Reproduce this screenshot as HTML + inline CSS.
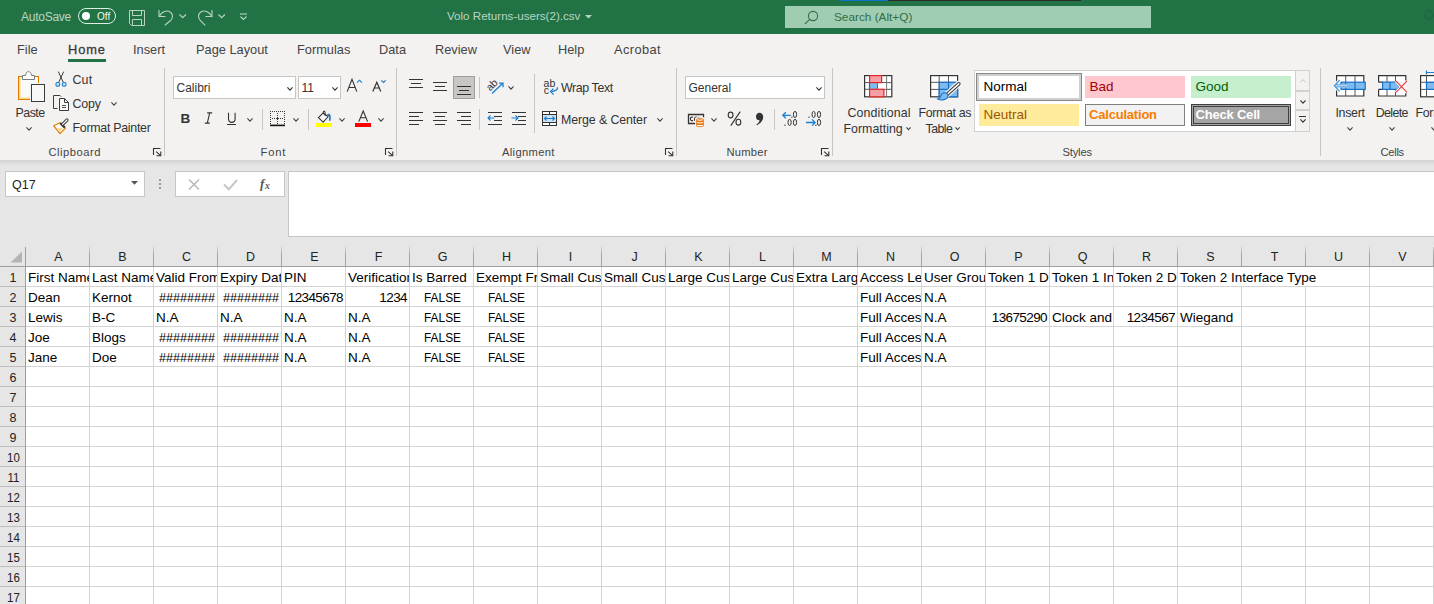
<!DOCTYPE html><html><head><meta charset="utf-8"><style>

*{margin:0;padding:0;box-sizing:border-box}
html,body{width:1434px;height:604px;overflow:hidden;background:#e6e6e6;font-family:"Liberation Sans",sans-serif;position:relative}
.ab{position:absolute;white-space:nowrap}
.t{position:absolute;white-space:nowrap;line-height:1}
svg{position:absolute;overflow:visible}

</style></head><body>
<div class="ab" style="left:0;top:0;width:1434px;height:34px;background:#217346"></div>
<div class="ab" style="left:840px;top:0;width:241px;height:1px;background:#2b2b2b"></div>
<div class="ab" style="left:840px;top:0;width:48px;height:1px;background:#0a72c8"></div>
<div class="t" style="left:21px;top:10.5px;font-size:12px;letter-spacing:-0.25px;color:#b9d5c2">AutoSave</div>
<div class="ab" style="left:78px;top:8px;width:38px;height:16px;border:1.3px solid #e0ece4;border-radius:8px"></div>
<div class="ab" style="left:82px;top:12px;width:8px;height:8px;background:#fff;border-radius:50%"></div>
<div class="t" style="left:97px;top:12px;font-size:10px;color:#f2f7f3">Off</div>
<svg style="left:128px;top:9px" width="18" height="18" viewBox="0 0 18 18"><g fill="none" stroke="#b9d5c2" stroke-width="1"><path d="M1.5 1.5h15v15h-13l-2-2z"/><path d="M4.5 1.5v5h9v-5"/><path d="M4.5 16.5v-6h9v6"/></g></svg>
<svg style="left:158px;top:9px" width="18" height="18" viewBox="0 0 18 18"><g fill="none" stroke="#b9d5c2" stroke-width="1.1"><path d="M1 1v6.5h6.5"/><path d="M1.5 7C3.5 2.5 9 0.5 12.5 3.2c3 2.4 2.4 6-0.2 8.6L6.8 16.3"/></g></svg>
<svg style="left:179px;top:14px" width="8" height="5" viewBox="0 0 8 5"><path d="M0.5 0.5l3.2 3.2 3.2-3.2" fill="none" stroke="#b9d5c2" stroke-width="1.1"/></svg>
<svg style="left:196px;top:9px" width="18" height="18" viewBox="0 0 18 18"><g fill="none" stroke="#b9d5c2" stroke-width="1.1"><path d="M16 1v6.5h-6.5"/><path d="M15.5 7C13.5 2.5 8 0.5 4.5 3.2c-3 2.4-2.4 6 0.2 8.6l4.5 4.5"/></g></svg>
<svg style="left:218px;top:14px" width="8" height="5" viewBox="0 0 8 5"><path d="M0.5 0.5l3.2 3.2 3.2-3.2" fill="none" stroke="#b9d5c2" stroke-width="1.1"/></svg>
<svg style="left:240px;top:13px" width="8" height="8" viewBox="0 0 8 8"><g fill="none" stroke="#b9d5c2" stroke-width="1.1"><path d="M0 1h7"/><path d="M0.5 3.5l3 3 3-3"/></g></svg>
<div class="t" style="left:447px;top:10px;font-size:11.6px;color:#b9d5c2">Volo Returns-users(2).csv</div>
<svg style="left:585px;top:15px" width="7" height="4" viewBox="0 0 7 4"><path d="M0 0h7l-3.5 3.5z" fill="#b9d5c2"/></svg>
<div class="ab" style="left:785px;top:6px;width:366px;height:22px;background:#a0cdb2"></div>
<svg style="left:804px;top:10px" width="15" height="15" viewBox="0 0 15 15"><g fill="none" stroke="#2f6e48" stroke-width="1.1"><circle cx="9" cy="6" r="4.6"/><path d="M5.7 9.3L0.8 14.2"/></g></svg>
<div class="t" style="left:834px;top:11.5px;font-size:11.8px;color:#2f6e48">Search (Alt+Q)</div>
<div class="ab" style="left:1424px;top:10px;width:10px;height:10px;border:2px solid #1f6a40;border-radius:50%"></div>
<div class="ab" style="left:0;top:34px;width:1434px;height:126px;background:#f3f2f1"></div>
<div class="t" style="left:17px;top:44px;font-size:12.8px;letter-spacing:0;color:#444">File</div>
<div class="t" style="left:68px;top:44px;font-size:12.8px;letter-spacing:0.9px;-webkit-text-stroke:0.3px #3a3a3a;color:#3a3a3a">Home</div>
<div class="t" style="left:133px;top:44px;font-size:12.8px;letter-spacing:0;color:#444">Insert</div>
<div class="t" style="left:196px;top:44px;font-size:12.8px;letter-spacing:0;color:#444">Page Layout</div>
<div class="t" style="left:297px;top:44px;font-size:12.8px;letter-spacing:0;color:#444">Formulas</div>
<div class="t" style="left:379px;top:44px;font-size:12.8px;letter-spacing:0;color:#444">Data</div>
<div class="t" style="left:435px;top:44px;font-size:12.8px;letter-spacing:0;color:#444">Review</div>
<div class="t" style="left:503px;top:44px;font-size:12.8px;letter-spacing:0;color:#444">View</div>
<div class="t" style="left:558px;top:44px;font-size:12.8px;letter-spacing:0;color:#444">Help</div>
<div class="t" style="left:614px;top:44px;font-size:12.8px;letter-spacing:0.4px;color:#444">Acrobat</div>
<div class="ab" style="left:68px;top:59px;width:38px;height:3px;background:#217346"></div>
<div class="ab" style="left:0;top:160px;width:1434px;height:6px;background:linear-gradient(#d2d2d2,#e6e6e6)"></div>
<div class="ab" style="left:164px;top:68px;width:1px;height:88px;background:#c8c6c4"></div>
<div class="ab" style="left:396px;top:68px;width:1px;height:88px;background:#c8c6c4"></div>
<div class="ab" style="left:676px;top:68px;width:1px;height:88px;background:#c8c6c4"></div>
<div class="ab" style="left:832px;top:68px;width:1px;height:88px;background:#c8c6c4"></div>
<div class="ab" style="left:1320px;top:68px;width:1px;height:88px;background:#c8c6c4"></div>
<div class="t" style="left:48.5px;top:146.52px;font-size:11.2px;color:#444;font-weight:normal;letter-spacing:0.5px">Clipboard</div>
<div class="t" style="left:260.5px;top:146.52px;font-size:11.2px;color:#444;font-weight:normal;letter-spacing:0.8px">Font</div>
<div class="t" style="left:502px;top:146.52px;font-size:11.2px;color:#444;font-weight:normal;letter-spacing:0.33px">Alignment</div>
<div class="t" style="left:726.5px;top:146.52px;font-size:11.2px;color:#444;font-weight:normal;letter-spacing:0.24px">Number</div>
<div class="t" style="left:1062.5px;top:146.52px;font-size:11.2px;color:#444;font-weight:normal;letter-spacing:-0.18px">Styles</div>
<div class="t" style="left:1380.5px;top:146.52px;font-size:11.2px;color:#444;font-weight:normal;letter-spacing:-0.3px">Cells</div>
<svg style="left:152px;top:147px" width="11" height="11" viewBox="0 0 11 11"><g fill="none" stroke="#333" stroke-width="1.1"><path d="M1.5 8V1.5H8.5"/><path d="M4.2 4.6L8.6 8.6"/><path d="M4.5 8.8h4.3V4.5"/></g></svg>
<svg style="left:384px;top:147px" width="11" height="11" viewBox="0 0 11 11"><g fill="none" stroke="#333" stroke-width="1.1"><path d="M1.5 8V1.5H8.5"/><path d="M4.2 4.6L8.6 8.6"/><path d="M4.5 8.8h4.3V4.5"/></g></svg>
<svg style="left:664px;top:147px" width="11" height="11" viewBox="0 0 11 11"><g fill="none" stroke="#333" stroke-width="1.1"><path d="M1.5 8V1.5H8.5"/><path d="M4.2 4.6L8.6 8.6"/><path d="M4.5 8.8h4.3V4.5"/></g></svg>
<svg style="left:820px;top:147px" width="11" height="11" viewBox="0 0 11 11"><g fill="none" stroke="#333" stroke-width="1.1"><path d="M1.5 8V1.5H8.5"/><path d="M4.2 4.6L8.6 8.6"/><path d="M4.5 8.8h4.3V4.5"/></g></svg>
<svg style="left:17px;top:71px" width="30" height="32" viewBox="0 0 30 32">
<rect x="1.5" y="5.5" width="20" height="23" fill="#fafafa" stroke="#e07b00" stroke-width="1"/>
<path d="M2.8 6.5v20.7h18.7" fill="none" stroke="#fcd98a" stroke-width="1.6"/>
<path d="M5.5 8.5v-4h3c0.5-3 1.5-3.8 3-3.8s2.5 0.8 3 3.8h3v4z" fill="#fff" stroke="#7a7a7a" stroke-width="1"/>
<rect x="13" y="12" width="16" height="20" fill="#f3f2f1"/>
<rect x="14.5" y="13.5" width="13" height="17" fill="#f8f8f8" stroke="#3c3c3c" stroke-width="1"/>
</svg>
<div class="t" style="left:15.5px;top:106.50px;font-size:12.4px;color:#333;font-weight:normal;letter-spacing:-0.5px">Paste</div>
<svg style="left:26px;top:127px" width="6" height="3.5" viewBox="0 0 6 3.5"><path d="M0.4 0.4L3.0 3.1L5.6 0.4" fill="none" stroke="#444" stroke-width="1.1"/></svg>
<svg style="left:55px;top:71px" width="12" height="16" viewBox="0 0 12 16">
<g fill="none" stroke="#3c3c3c" stroke-width="1"><path d="M3.3 0.6L8.4 11.5"/><path d="M8.7 0.6L3.6 11.5"/></g>
<rect x="1" y="11.5" width="3.6" height="3.6" rx="1.2" fill="#d6e6f2" stroke="#1a7fd0" stroke-width="1.1"/>
<rect x="7.4" y="11.5" width="3.6" height="3.6" rx="1.2" fill="#d6e6f2" stroke="#1a7fd0" stroke-width="1.1"/>
</svg>
<div class="t" style="left:72.5px;top:73.80px;font-size:12.4px;color:#333;font-weight:normal;letter-spacing:0.15px">Cut</div>
<svg style="left:53px;top:95px" width="17" height="17" viewBox="0 0 17 17">
<path d="M4.5 13.5H0.5V0.5h6.5l1.2 1.2" fill="none" stroke="#3c3c3c" stroke-width="1"/>
<path d="M6.5 15.5V3.5h5l4 4v8z" fill="#fafafa" stroke="#3c3c3c" stroke-width="1"/>
<path d="M11.5 3.5v4h4" fill="none" stroke="#3c3c3c" stroke-width="1"/>
<path d="M9 10.5h4M9 12.5h4" stroke="#3c3c3c" stroke-width="0.9"/>
</svg>
<div class="t" style="left:72.5px;top:97.50px;font-size:12.4px;color:#333;font-weight:normal;letter-spacing:-0.2px">Copy</div>
<svg style="left:110.5px;top:102px" width="6" height="3.5" viewBox="0 0 6 3.5"><path d="M0.4 0.4L3.0 3.1L5.6 0.4" fill="none" stroke="#444" stroke-width="1.1"/></svg>
<svg style="left:53px;top:118px" width="17" height="17" viewBox="0 0 17 17">
<path d="M0.8 7.8L7 4.8l5.4 5.4L7 15.6z" fill="#fff" stroke="#e07b00" stroke-width="1.2" stroke-linejoin="round"/>
<path d="M3.5 10.5L10 9.8 7 14z" fill="#fcd98a"/>
<path d="M7.2 5L11.8 9.6" stroke="#3c3c3c" stroke-width="2.2"/>
<path d="M9.4 6.6l4.6-4.6" stroke="#3c3c3c" stroke-width="3.2" stroke-linecap="round"/>
<path d="M9.6 6.4l4.4-4.4" stroke="#fff" stroke-width="1.2" stroke-linecap="round"/>
</svg>
<div class="t" style="left:72.5px;top:121.50px;font-size:12.4px;color:#333;font-weight:normal;letter-spacing:-0.28px">Format Painter</div>
<div class="ab" style="left:173px;top:76px;width:123px;height:23px;background:#fff;border:1px solid #c8c6c4"></div>
<div class="t" style="left:176.5px;top:82.04px;font-size:12px;color:#333;font-weight:normal;">Calibri</div>
<svg style="left:286.5px;top:86.5px" width="6" height="3.5" viewBox="0 0 6 3.5"><path d="M0.4 0.4L3.0 3.1L5.6 0.4" fill="none" stroke="#333" stroke-width="1.1"/></svg>
<div class="ab" style="left:298px;top:76px;width:43px;height:23px;background:#fff;border:1px solid #c8c6c4"></div>
<div class="t" style="left:301.5px;top:82.04px;font-size:12px;color:#333;font-weight:normal;">11</div>
<svg style="left:331.5px;top:86.5px" width="6" height="3.5" viewBox="0 0 6 3.5"><path d="M0.4 0.4L3.0 3.1L5.6 0.4" fill="none" stroke="#333" stroke-width="1.1"/></svg>
<svg style="left:346px;top:78px" width="18" height="15" viewBox="0 0 18 15">
<path d="M1.2 13.6L6 1.2 10.8 13.6M3 9.5h6" fill="none" stroke="#333" stroke-width="1.1"/>
<path d="M11.2 4.5L13.5 2.2 15.8 4.5" fill="none" stroke="#1a7fd0" stroke-width="1.1"/>
</svg>
<svg style="left:372px;top:78px" width="16" height="15" viewBox="0 0 16 15">
<path d="M0.8 13.6L4.8 4.2 8.8 13.6M2.4 10h5" fill="none" stroke="#333" stroke-width="1.2"/>
<path d="M9.3 2.3L11.5 4.5 13.7 2.3" fill="none" stroke="#1a7fd0" stroke-width="1.2"/>
</svg>
<div class="t" style="left:180.5px;top:111.57px;font-size:13.5px;color:#333;font-weight:bold;">B</div>
<svg style="left:204px;top:112px" width="9" height="12" viewBox="0 0 9 12"><path d="M3.2 0.9h5M0.8 11.1h5M5.7 0.9L3.3 11.1" fill="none" stroke="#333" stroke-width="1.1"/></svg>
<svg style="left:227px;top:112px" width="10" height="14" viewBox="0 0 10 14"><path d="M1.5 0.8v6c0 2.6 1.3 3.6 3.3 3.6s3.3-1 3.3-3.6v-6" fill="none" stroke="#333" stroke-width="1.1"/></svg>
<div class="ab" style="left:227px;top:124px;width:9px;height:1px;background:#333"></div>
<svg style="left:246.5px;top:118px" width="6" height="3.5" viewBox="0 0 6 3.5"><path d="M0.4 0.4L3.0 3.1L5.6 0.4" fill="none" stroke="#444" stroke-width="1.1"/></svg>
<div class="ab" style="left:262px;top:109px;width:1px;height:21px;background:#c8c6c4"></div>
<svg style="left:269px;top:111px" width="17" height="16" viewBox="0 0 17 16"><g fill="#3a3a3a"><rect x="1" y="0" width="1" height="1"/><rect x="3" y="0" width="1" height="1"/><rect x="5" y="0" width="1" height="1"/><rect x="7" y="0" width="1" height="1"/><rect x="9" y="0" width="1" height="1"/><rect x="11" y="0" width="1" height="1"/><rect x="13" y="0" width="1" height="1"/><rect x="15" y="0" width="1" height="1"/><rect x="1" y="2" width="1" height="1"/><rect x="15" y="2" width="1" height="1"/><rect x="1" y="4" width="1" height="1"/><rect x="15" y="4" width="1" height="1"/><rect x="1" y="6" width="1" height="1"/><rect x="15" y="6" width="1" height="1"/><rect x="1" y="8" width="1" height="1"/><rect x="15" y="8" width="1" height="1"/><rect x="1" y="10" width="1" height="1"/><rect x="15" y="10" width="1" height="1"/><rect x="1" y="12" width="1" height="1"/><rect x="15" y="12" width="1" height="1"/><rect x="8" y="2" width="1" height="1"/><rect x="8" y="4" width="1" height="1"/><rect x="8" y="10" width="1" height="1"/><rect x="8" y="12" width="1" height="1"/><rect x="3" y="7" width="1" height="1"/><rect x="5" y="7" width="1" height="1"/><rect x="11" y="7" width="1" height="1"/><rect x="13" y="7" width="1" height="1"/><rect x="7" y="7" width="3" height="1"/><rect x="8" y="6" width="1" height="3"/></g><rect x="1" y="13.6" width="15" height="1.6" fill="#111"/></svg>
<svg style="left:292.5px;top:118px" width="6" height="3.5" viewBox="0 0 6 3.5"><path d="M0.4 0.4L3.0 3.1L5.6 0.4" fill="none" stroke="#444" stroke-width="1.1"/></svg>
<div class="ab" style="left:308px;top:109px;width:1px;height:21px;background:#c8c6c4"></div>
<svg style="left:315px;top:110px" width="17" height="18" viewBox="0 0 17 18">
<path d="M3.4 7.7L8 3.2 13.2 6.5 8.2 12.2z" fill="#fafafa" stroke="#333" stroke-width="1.1" stroke-linejoin="round"/>
<path d="M8.2 3.1C8.3 1.6 8.8 1 9.4 1.2c0.6 0.3 0.8 2 0.8 4.8" fill="none" stroke="#333" stroke-width="1.1"/>
<path d="M12.5 5.5c1.2-1.6 2.6-0.8 2.5 1.6l-0.3 3.7" fill="none" stroke="#1a6fc2" stroke-width="1.6"/>
<rect x="1" y="13" width="16" height="4" fill="#ffff00"/>
</svg>
<svg style="left:338.5px;top:118px" width="6" height="3.5" viewBox="0 0 6 3.5"><path d="M0.4 0.4L3.0 3.1L5.6 0.4" fill="none" stroke="#444" stroke-width="1.1"/></svg>
<svg style="left:358px;top:110px" width="11" height="12" viewBox="0 0 11 12"><path d="M0.8 11.6L5.2 1 9.6 11.6M2.5 7.8h5.4" fill="none" stroke="#333" stroke-width="1.1"/></svg>
<div class="ab" style="left:355px;top:123px;width:16px;height:4px;background:#ff0000"></div>
<svg style="left:377.5px;top:118px" width="6" height="3.5" viewBox="0 0 6 3.5"><path d="M0.4 0.4L3.0 3.1L5.6 0.4" fill="none" stroke="#444" stroke-width="1.1"/></svg>
<div class="ab" style="left:409px;top:79px;width:14px;height:1px;background:#333"></div>
<div class="ab" style="left:411px;top:83px;width:10px;height:1px;background:#333"></div>
<div class="ab" style="left:409px;top:87px;width:0px;height:1px;background:#333"></div>
<div class="ab" style="left:433px;top:82px;width:14px;height:1px;background:#333"></div>
<div class="ab" style="left:435px;top:86px;width:10px;height:1px;background:#333"></div>
<div class="ab" style="left:433px;top:90px;width:14px;height:1px;background:#333"></div>
<div class="ab" style="left:453px;top:76px;width:22px;height:23px;background:#c8c6c4;border:1px solid #a19f9d"></div>
<div class="ab" style="left:457px;top:86px;width:14px;height:1px;background:#333"></div>
<div class="ab" style="left:459px;top:90px;width:10px;height:1px;background:#333"></div>
<div class="ab" style="left:457px;top:94px;width:14px;height:1px;background:#333"></div>
<div class="ab" style="left:409px;top:87px;width:14px;height:1px;background:#333"></div>
<div class="ab" style="left:479px;top:77px;width:1px;height:21px;background:#c8c6c4"></div>
<svg style="left:484px;top:76px" width="22" height="20" viewBox="0 0 22 20">
<text x="0" y="0" font-size="10.5" font-family="Liberation Sans" fill="#333" transform="translate(6.2 15.6) rotate(-45)">ab</text>
<path d="M8 17.5L18.8 7.2" stroke="#1a7fd0" stroke-width="1.3"/>
<path d="M15 7.2h4v4" fill="none" stroke="#1a7fd0" stroke-width="1.3"/>
</svg>
<svg style="left:507.5px;top:85.5px" width="6" height="3.5" viewBox="0 0 6 3.5"><path d="M0.4 0.4L3.0 3.1L5.6 0.4" fill="none" stroke="#444" stroke-width="1.1"/></svg>
<div class="ab" style="left:534px;top:74px;width:1px;height:59px;background:#c8c6c4"></div>
<svg style="left:543px;top:77px" width="17" height="19" viewBox="0 0 17 19">
<text x="0.6" y="9.6" font-size="10.5" font-family="Liberation Sans" fill="#333">ab</text>
<text x="0.8" y="16.6" font-size="10.5" font-family="Liberation Sans" fill="#333">c</text>
<path d="M14.2 10.2c0.9 1.8-0.6 3.8-5.6 4.4" fill="none" stroke="#1a7fd0" stroke-width="1.3"/>
<path d="M10.4 11.6L7.6 14.6l3 3" fill="none" stroke="#1a7fd0" stroke-width="1.3"/>
</svg>
<div class="t" style="left:561px;top:82.00px;font-size:12.4px;color:#333;font-weight:normal;letter-spacing:-0.4px">Wrap Text</div>
<div class="ab" style="left:409px;top:112px;width:14px;height:1px;background:#333"></div>
<div class="ab" style="left:409px;top:116px;width:10px;height:1px;background:#333"></div>
<div class="ab" style="left:409px;top:120px;width:14px;height:1px;background:#333"></div>
<div class="ab" style="left:409px;top:124px;width:10px;height:1px;background:#333"></div>
<div class="ab" style="left:433px;top:112px;width:14px;height:1px;background:#333"></div>
<div class="ab" style="left:435px;top:116px;width:10px;height:1px;background:#333"></div>
<div class="ab" style="left:433px;top:120px;width:14px;height:1px;background:#333"></div>
<div class="ab" style="left:435px;top:124px;width:10px;height:1px;background:#333"></div>
<div class="ab" style="left:457px;top:112px;width:14px;height:1px;background:#333"></div>
<div class="ab" style="left:461px;top:116px;width:10px;height:1px;background:#333"></div>
<div class="ab" style="left:457px;top:120px;width:14px;height:1px;background:#333"></div>
<div class="ab" style="left:461px;top:124px;width:10px;height:1px;background:#333"></div>
<div class="ab" style="left:479px;top:109px;width:1px;height:21px;background:#c8c6c4"></div>
<div class="ab" style="left:488px;top:112px;width:14px;height:1px;background:#333"></div>
<div class="ab" style="left:488px;top:124px;width:14px;height:1px;background:#333"></div>
<div class="ab" style="left:494px;top:116px;width:8px;height:1px;background:#333"></div>
<div class="ab" style="left:494px;top:120px;width:8px;height:1px;background:#333"></div>
<svg style="left:487px;top:114px" width="8" height="8" viewBox="0 0 8 8"><path d="M7.5 4H1M3.5 1.5L1 4l2.5 2.5" fill="none" stroke="#1a7fd0" stroke-width="1.1"/></svg>
<div class="ab" style="left:512px;top:112px;width:14px;height:1px;background:#333"></div>
<div class="ab" style="left:512px;top:124px;width:14px;height:1px;background:#333"></div>
<div class="ab" style="left:518px;top:116px;width:8px;height:1px;background:#333"></div>
<div class="ab" style="left:518px;top:120px;width:8px;height:1px;background:#333"></div>
<svg style="left:511px;top:114px" width="8" height="8" viewBox="0 0 8 8"><path d="M0.5 4H7M4.5 1.5L7 4 4.5 6.5" fill="none" stroke="#1a7fd0" stroke-width="1.1"/></svg>
<svg style="left:542px;top:111px" width="15" height="15" viewBox="0 0 15 15">
<rect x="0.5" y="0.5" width="14" height="14" fill="#fff" stroke="#333" stroke-width="1"/>
<path d="M0.5 3.5h14M0.5 11.5h14M7.5 0.5v3M7.5 11.5v3" stroke="#333" stroke-width="1"/>
<rect x="1" y="4" width="13" height="7" fill="#cfe3f5"/>
<path d="M2.5 7.5h10M4.5 5.5l-2 2 2 2M10.5 5.5l2 2-2 2" fill="none" stroke="#1a7fd0" stroke-width="1.1"/>
</svg>
<div class="t" style="left:561px;top:113.80px;font-size:12.4px;color:#333;font-weight:normal;letter-spacing:-0.11px">Merge &amp; Center</div>
<svg style="left:657px;top:118px" width="6" height="3.5" viewBox="0 0 6 3.5"><path d="M0.4 0.4L3.0 3.1L5.6 0.4" fill="none" stroke="#444" stroke-width="1.1"/></svg>
<div class="ab" style="left:685px;top:76px;width:140px;height:23px;background:#fff;border:1px solid #c8c6c4"></div>
<div class="t" style="left:688.5px;top:82.04px;font-size:12px;color:#333;font-weight:normal;">General</div>
<svg style="left:815.5px;top:86.5px" width="6" height="3.5" viewBox="0 0 6 3.5"><path d="M0.4 0.4L3.0 3.1L5.6 0.4" fill="none" stroke="#333" stroke-width="1.1"/></svg>
<svg style="left:687px;top:113px" width="18" height="15" viewBox="0 0 18 15">
<path d="M8.5 10.5H1.5V1.5h15v6" fill="none" stroke="#333" stroke-width="1.3"/>
<path d="M6 4.2c-1.2-0.6-2.6 0-2.6 1.6s1.4 2.2 2.6 1.6M10 4.2c-1.2-0.6-2.4 0-2.4 1.6v2" fill="none" stroke="#333" stroke-width="1.1"/>
<path d="M12.5 4.5c-0.8-0.3-1.6 0-1.9 0.8" fill="none" stroke="#333" stroke-width="1.1"/>
<rect x="8.2" y="4.2" width="9.6" height="10.6" rx="1" fill="#f3f2f1"/>
<path d="M9.2 6.4c0-1.6 7.6-1.6 7.6 0v6.4c0 1.8-7.6 1.8-7.6 0z" fill="#e8740c"/>
<path d="M10.2 6.6c1 0.8 4.6 0.8 5.6 0M10.2 9.4c1 0.8 4.6 0.8 5.6 0M10.2 12.2c1 0.6 4.6 0.6 5.6 0" fill="none" stroke="#fff" stroke-width="1.1"/>
</svg>
<svg style="left:711px;top:118px" width="6" height="3.5" viewBox="0 0 6 3.5"><path d="M0.4 0.4L3.0 3.1L5.6 0.4" fill="none" stroke="#444" stroke-width="1.1"/></svg>
<svg style="left:727px;top:111px" width="16" height="16" viewBox="0 0 16 16">
<ellipse cx="3.6" cy="4" rx="2.4" ry="2.9" fill="none" stroke="#333" stroke-width="1.1"/>
<ellipse cx="11.4" cy="11.2" rx="2.4" ry="2.9" fill="none" stroke="#333" stroke-width="1.1"/>
<path d="M13.2 0.6L3.8 14.6" stroke="#333" stroke-width="1.1"/>
</svg>
<svg style="left:755px;top:112px" width="9" height="14" viewBox="0 0 9 14">
<path d="M4.3 0.8c2.3 0 3.9 1.7 3.9 4.2 0 3.4-2.6 6.3-6.3 8.2l-0.5-0.7c1.8-1.2 3-2.6 3.2-4.2-2.1 0.1-3.6-1.2-3.6-3.6 0-2.2 1.4-3.9 3.3-3.9z" fill="#333"/>
</svg>
<div class="ab" style="left:774px;top:109px;width:1px;height:21px;background:#c8c6c4"></div>
<svg style="left:781px;top:110px" width="17" height="17" viewBox="0 0 17 17">
<path d="M9.8 5.3H1.7M4.8 2.3l-3 3 3 3" fill="none" stroke="#1a7fd0" stroke-width="1.3"/>
<ellipse cx="14" cy="4.5" rx="1.6" ry="3.1" fill="none" stroke="#333" stroke-width="1"/>
<rect x="10.3" y="6.6" width="1.2" height="1.2" fill="#333"/>
<rect x="3.4" y="14.6" width="1.2" height="1.2" fill="#333"/>
<ellipse cx="8.6" cy="12.4" rx="1.6" ry="3.1" fill="none" stroke="#333" stroke-width="1"/>
<ellipse cx="14" cy="12.4" rx="1.6" ry="3.1" fill="none" stroke="#333" stroke-width="1"/>
</svg>
<svg style="left:805px;top:110px" width="17" height="17" viewBox="0 0 17 17">
<rect x="3.4" y="6.6" width="1.2" height="1.2" fill="#333"/>
<ellipse cx="8.6" cy="4.5" rx="1.6" ry="3.1" fill="none" stroke="#333" stroke-width="1"/>
<ellipse cx="14" cy="4.5" rx="1.6" ry="3.1" fill="none" stroke="#333" stroke-width="1"/>
<path d="M1 12.5h9M7 9.4l3.1 3.1L7 15.6" fill="none" stroke="#1a7fd0" stroke-width="1.3"/>
<rect x="10.3" y="14.6" width="1.2" height="1.2" fill="#333"/>
<ellipse cx="14" cy="12.4" rx="1.6" ry="3.1" fill="none" stroke="#333" stroke-width="1"/>
</svg>
<svg style="left:864px;top:75px" width="29" height="23" viewBox="0 0 29 23">
<rect x="0.6" y="0.6" width="27.2" height="21.2" fill="#fff" stroke="#333" stroke-width="1.2"/>
<path d="M0.6 7.6h27.2M0.6 14.3h27.2" stroke="#555" stroke-width="1"/>
<path d="M22.6 0.6v21.2" stroke="#777" stroke-width="1"/>
<rect x="5.5" y="7.6" width="8.5" height="6.7" fill="#7fbbee"/>
<path d="M13.7 8.2v5.6" stroke="#1570c8" stroke-width="1.2"/>
<path d="M5.5 7.6v6.7" stroke="#1570c8" stroke-width="1.2"/>
<rect x="14" y="8.2" width="8" height="5.6" fill="#fff"/>
<rect x="5.6" y="0.6" width="12" height="7" fill="#f79fa6" stroke="#e3261f" stroke-width="1.2"/>
<rect x="5.6" y="14.3" width="14.3" height="7.5" fill="#f79fa6" stroke="#e3261f" stroke-width="1.2"/>
</svg>
<div class="t" style="left:847.5px;top:106.90px;font-size:12.4px;color:#333;font-weight:normal;letter-spacing:0.11px">Conditional</div>
<div class="t" style="left:843.5px;top:122.50px;font-size:12.4px;color:#333;font-weight:normal;letter-spacing:0.0px">Formatting</div>
<svg style="left:906px;top:127px" width="5" height="3" viewBox="0 0 5 3"><path d="M0.4 0.4L2.5 2.6L4.6 0.4" fill="none" stroke="#444" stroke-width="1.1"/></svg>
<svg style="left:929px;top:74px" width="34" height="29" viewBox="0 0 34 29">
<rect x="1.6" y="1.6" width="27" height="21.2" fill="#fff" stroke="#333" stroke-width="1.2"/>
<path d="M1.6 8.3h27M1.6 15.4h27M10.2 1.6v21.2M19.5 1.6v21.2" stroke="#555" stroke-width="1"/>
<rect x="10.2" y="8.3" width="18.4" height="14.5" fill="#7fbbee" stroke="#1570c8" stroke-width="1.2"/>
<path d="M10.2 15.4h18.4M19.5 8.3v14.5" stroke="#1570c8" stroke-width="1.2"/>
<path d="M29.8 9.8L17.4 21" stroke="#f3f2f1" stroke-width="6" stroke-linecap="round"/>
<path d="M29.8 9.8L17.4 21" stroke="#333" stroke-width="3.6" stroke-linecap="round"/>
<path d="M29.8 9.8L17.4 21" stroke="#fff" stroke-width="1.6" stroke-linecap="round"/>
<path d="M17.6 19.2c-2.4-1.2-4.8 0-5.6 2.4-0.5 1.6-1.4 2.6-3.3 3.3 3.2 1.6 7.4 1.3 9.3-0.7 1.4-1.5 1.4-3.8-0.4-5z" fill="#7fbbee" stroke="#1570c8" stroke-width="1.1"/>
</svg>
<div class="t" style="left:918.5px;top:106.90px;font-size:12.4px;color:#333;font-weight:normal;letter-spacing:-0.34px">Format as</div>
<div class="t" style="left:925.5px;top:122.50px;font-size:12.4px;color:#333;font-weight:normal;letter-spacing:-0.55px">Table</div>
<svg style="left:955px;top:127px" width="5" height="3" viewBox="0 0 5 3"><path d="M0.4 0.4L2.5 2.6L4.6 0.4" fill="none" stroke="#444" stroke-width="1.1"/></svg>
<div class="ab" style="left:974px;top:70px;width:336px;height:62px;background:#fff;border:1px solid #d2d0ce"></div>
<div class="ab" style="left:976px;top:73px;width:106px;height:28px;border:1px solid #8a8886;background:#fff;box-shadow:inset 0 0 0 2px #cfcfcf"></div>
<div class="t" style="left:983.5px;top:79.57px;font-size:13.5px;color:#000;font-weight:normal;">Normal</div>
<div class="ab" style="left:1085px;top:76px;width:100px;height:22px;background:#ffc7ce"></div>
<div class="t" style="left:1089.5px;top:79.57px;font-size:13.5px;color:#9c0006;font-weight:normal;">Bad</div>
<div class="ab" style="left:1191px;top:76px;width:100px;height:22px;background:#c6efce"></div>
<div class="t" style="left:1195.5px;top:79.57px;font-size:13.5px;color:#006100;font-weight:normal;">Good</div>
<div class="ab" style="left:979px;top:104px;width:100px;height:22px;background:#ffeb9c"></div>
<div class="t" style="left:983.5px;top:107.87px;font-size:13.5px;color:#9c5700;font-weight:normal;">Neutral</div>
<div class="ab" style="left:1085px;top:104px;width:100px;height:22px;background:#f2f2f2;border:1px solid #7f7f7f"></div>
<div class="t" style="left:1089px;top:108.30px;font-size:13px;color:#fa7d00;font-weight:bold;letter-spacing:-0.2px">Calculation</div>
<div class="ab" style="left:1191px;top:104px;width:100px;height:22px;background:#a5a5a5;border:1px solid #3f3f3f;box-shadow:inset 0 0 0 1px #a5a5a5, inset 0 0 0 2px #3f3f3f"></div>
<div class="t" style="left:1195.5px;top:108.30px;font-size:13px;color:#fff;font-weight:bold;letter-spacing:-0.2px">Check Cell</div>
<div class="ab" style="left:1295px;top:70px;width:15px;height:21px;background:#f3f2f1;border:1px solid #d2d0ce"></div>
<div class="ab" style="left:1295px;top:91px;width:15px;height:19px;background:#f3f2f1;border:1px solid #d2d0ce"></div>
<div class="ab" style="left:1295px;top:110px;width:15px;height:22px;background:#f3f2f1;border:1px solid #d2d0ce"></div>
<svg style="left:1300px;top:79px" width="6" height="4" viewBox="0 0 6 4"><path d="M0.4 3.4L3 0.6 5.6 3.4" fill="none" stroke="#c8c6c4" stroke-width="1"/></svg>
<svg style="left:1299.5px;top:99.5px" width="6" height="3.5" viewBox="0 0 6 3.5"><path d="M0.4 0.4L3.0 3.1L5.6 0.4" fill="none" stroke="#333" stroke-width="1.1"/></svg>
<div class="ab" style="left:1299px;top:116px;width:7px;height:1px;background:#333"></div>
<svg style="left:1299.5px;top:119px" width="6" height="3.5" viewBox="0 0 6 3.5"><path d="M0.4 0.4L3.0 3.1L5.6 0.4" fill="none" stroke="#333" stroke-width="1.1"/></svg>
<svg style="left:1333px;top:74px" width="34" height="24" viewBox="0 0 34 24">
<path d="M3.6 8.2V1.6h27.2v6.6M3.6 15.4v6.6h27.2v-6.6" fill="#fff" stroke="#333" stroke-width="1.2"/>
<path d="M12.7 1.6v6.6M22 1.6v6.6M12.7 15.4v6.6M22 15.4v6.6" stroke="#555" stroke-width="1"/>
<rect x="8" y="8.2" width="24.2" height="7.2" fill="#7fbbee" stroke="#1570c8" stroke-width="1.2"/>
<path d="M12.7 8.2v7.2M22 8.2v7.2" stroke="#1570c8" stroke-width="1.2"/>
<path d="M14 11.8H2.2M6.6 6.2L1.4 11.8l5.2 5.6" fill="none" stroke="#f3f2f1" stroke-width="3.4"/>
<path d="M14 10.8H3M14 12.8H3" fill="none" stroke="#2f8ee0" stroke-width="0.9"/>
<path d="M6.6 6.2L1.4 11.8l5.2 5.6" fill="none" stroke="#2f8ee0" stroke-width="1.2"/>
</svg>
<div class="t" style="left:1335.5px;top:106.50px;font-size:12.4px;color:#333;font-weight:normal;letter-spacing:-0.32px">Insert</div>
<svg style="left:1346.5px;top:127px" width="6" height="3.5" viewBox="0 0 6 3.5"><path d="M0.4 0.4L3.0 3.1L5.6 0.4" fill="none" stroke="#444" stroke-width="1.1"/></svg>
<svg style="left:1376px;top:74px" width="34" height="24" viewBox="0 0 34 24">
<path d="M2.6 8.2V1.6h27.2v6.6M2.6 15.4v6.6h27.2v-6.6M2.6 8.2h4M2.6 15.4h4" fill="#fff" stroke="#333" stroke-width="1.2"/>
<path d="M11 1.6v6.6M19.5 1.6v6.6M11 15.4v6.6M19.5 15.4v6.6" stroke="#555" stroke-width="1"/>
<path d="M6.6 8.2h14.4l3.6 3.6-3.6 3.6H6.6z" fill="#7fbbee" stroke="#1570c8" stroke-width="1.2"/>
<path d="M14 8.2v7.2" stroke="#1570c8" stroke-width="1.2"/>
<path d="M20 7l11 11.4M31 7L20 18.4" stroke="#fff" stroke-width="3"/>
<path d="M20 7l11 11.4M31 7L20 18.4" stroke="#e94545" stroke-width="1.1"/>
</svg>
<div class="t" style="left:1375.7px;top:106.50px;font-size:12.4px;color:#333;font-weight:normal;letter-spacing:-0.62px">Delete</div>
<svg style="left:1388.5px;top:127px" width="6" height="3.5" viewBox="0 0 6 3.5"><path d="M0.4 0.4L3.0 3.1L5.6 0.4" fill="none" stroke="#444" stroke-width="1.1"/></svg>
<svg style="left:1419px;top:70px" width="20" height="28" viewBox="0 0 20 28">
<path d="M7.5 2.5H20M7.5 0.5v4" stroke="#1a7fd0" stroke-width="1.2"/>
<rect x="1.6" y="5.6" width="20" height="21.2" fill="#fff" stroke="#333" stroke-width="1.2"/>
<path d="M1.6 12.3h20M1.6 19.4h20M7.5 5.6v21.2" stroke="#555" stroke-width="1"/>
<rect x="7.5" y="12.3" width="14" height="7.1" fill="#7fbbee" stroke="#1570c8" stroke-width="1.2"/>
</svg>
<div class="t" style="left:1415.6px;top:106.50px;font-size:12.4px;color:#333;font-weight:normal;letter-spacing:-0.35px">Format</div>
<svg style="left:1431px;top:127px" width="6" height="3.5" viewBox="0 0 6 3.5"><path d="M0.4 0.4L3.0 3.1L5.6 0.4" fill="none" stroke="#444" stroke-width="1.1"/></svg>
<div class="ab" style="left:5px;top:171px;width:140px;height:26px;background:#fff;border:1px solid #c6c6c6"></div>
<div class="t" style="left:12px;top:179.42px;font-size:12.5px;color:#222;font-weight:normal;">Q17</div>
<svg style="left:131px;top:181px" width="7" height="4" viewBox="0 0 7 4"><path d="M0 0h7l-3.5 3.8z" fill="#555"/></svg>
<div class="ab" style="left:159px;top:179px;width:2px;height:2px;background:#999"></div>
<div class="ab" style="left:159px;top:183px;width:2px;height:2px;background:#999"></div>
<div class="ab" style="left:159px;top:187px;width:2px;height:2px;background:#999"></div>
<div class="ab" style="left:175px;top:171px;width:110px;height:26px;background:#fff;border:1px solid #c6c6c6"></div>
<svg style="left:188px;top:179px" width="12" height="11" viewBox="0 0 12 11"><path d="M1 0.5l10 10M11 0.5l-10 10" stroke="#b8b8b8" stroke-width="1.5"/></svg>
<svg style="left:223px;top:179px" width="15" height="12" viewBox="0 0 15 12"><path d="M1 5.5l4.8 4.8L14 1" fill="none" stroke="#c6c6c6" stroke-width="2"/></svg>
<svg style="left:259px;top:176px" width="14" height="15" viewBox="0 0 14 15"><text x="1" y="11.5" font-size="13" font-family="Liberation Serif" font-style="italic" font-weight="bold" fill="#555">f</text><text x="6" y="12.5" font-size="9.5" font-family="Liberation Serif" font-style="italic" font-weight="bold" fill="#555">x</text></svg>
<div class="ab" style="left:288px;top:171px;width:1160px;height:66px;background:#fff;border:1px solid #c6c6c6"></div>
<div class="ab" style="left:26px;top:267px;width:1408px;height:337px;background:#fff"></div>
<div class="ab" style="left:89px;top:267px;width:1px;height:337px;background:#d4d4d4"></div>
<div class="ab" style="left:89px;top:247px;width:1px;height:19px;background:linear-gradient(#d0d0d0,#a8a8a8 40%,#9e9e9e)"></div>
<div class="ab" style="left:153px;top:267px;width:1px;height:337px;background:#d4d4d4"></div>
<div class="ab" style="left:153px;top:247px;width:1px;height:19px;background:linear-gradient(#d0d0d0,#a8a8a8 40%,#9e9e9e)"></div>
<div class="ab" style="left:217px;top:267px;width:1px;height:337px;background:#d4d4d4"></div>
<div class="ab" style="left:217px;top:247px;width:1px;height:19px;background:linear-gradient(#d0d0d0,#a8a8a8 40%,#9e9e9e)"></div>
<div class="ab" style="left:281px;top:267px;width:1px;height:337px;background:#d4d4d4"></div>
<div class="ab" style="left:281px;top:247px;width:1px;height:19px;background:linear-gradient(#d0d0d0,#a8a8a8 40%,#9e9e9e)"></div>
<div class="ab" style="left:345px;top:267px;width:1px;height:337px;background:#d4d4d4"></div>
<div class="ab" style="left:345px;top:247px;width:1px;height:19px;background:linear-gradient(#d0d0d0,#a8a8a8 40%,#9e9e9e)"></div>
<div class="ab" style="left:409px;top:267px;width:1px;height:337px;background:#d4d4d4"></div>
<div class="ab" style="left:409px;top:247px;width:1px;height:19px;background:linear-gradient(#d0d0d0,#a8a8a8 40%,#9e9e9e)"></div>
<div class="ab" style="left:473px;top:267px;width:1px;height:337px;background:#d4d4d4"></div>
<div class="ab" style="left:473px;top:247px;width:1px;height:19px;background:linear-gradient(#d0d0d0,#a8a8a8 40%,#9e9e9e)"></div>
<div class="ab" style="left:537px;top:267px;width:1px;height:337px;background:#d4d4d4"></div>
<div class="ab" style="left:537px;top:247px;width:1px;height:19px;background:linear-gradient(#d0d0d0,#a8a8a8 40%,#9e9e9e)"></div>
<div class="ab" style="left:601px;top:267px;width:1px;height:337px;background:#d4d4d4"></div>
<div class="ab" style="left:601px;top:247px;width:1px;height:19px;background:linear-gradient(#d0d0d0,#a8a8a8 40%,#9e9e9e)"></div>
<div class="ab" style="left:665px;top:267px;width:1px;height:337px;background:#d4d4d4"></div>
<div class="ab" style="left:665px;top:247px;width:1px;height:19px;background:linear-gradient(#d0d0d0,#a8a8a8 40%,#9e9e9e)"></div>
<div class="ab" style="left:729px;top:267px;width:1px;height:337px;background:#d4d4d4"></div>
<div class="ab" style="left:729px;top:247px;width:1px;height:19px;background:linear-gradient(#d0d0d0,#a8a8a8 40%,#9e9e9e)"></div>
<div class="ab" style="left:793px;top:267px;width:1px;height:337px;background:#d4d4d4"></div>
<div class="ab" style="left:793px;top:247px;width:1px;height:19px;background:linear-gradient(#d0d0d0,#a8a8a8 40%,#9e9e9e)"></div>
<div class="ab" style="left:857px;top:267px;width:1px;height:337px;background:#d4d4d4"></div>
<div class="ab" style="left:857px;top:247px;width:1px;height:19px;background:linear-gradient(#d0d0d0,#a8a8a8 40%,#9e9e9e)"></div>
<div class="ab" style="left:921px;top:267px;width:1px;height:337px;background:#d4d4d4"></div>
<div class="ab" style="left:921px;top:247px;width:1px;height:19px;background:linear-gradient(#d0d0d0,#a8a8a8 40%,#9e9e9e)"></div>
<div class="ab" style="left:985px;top:267px;width:1px;height:337px;background:#d4d4d4"></div>
<div class="ab" style="left:985px;top:247px;width:1px;height:19px;background:linear-gradient(#d0d0d0,#a8a8a8 40%,#9e9e9e)"></div>
<div class="ab" style="left:1049px;top:267px;width:1px;height:337px;background:#d4d4d4"></div>
<div class="ab" style="left:1049px;top:247px;width:1px;height:19px;background:linear-gradient(#d0d0d0,#a8a8a8 40%,#9e9e9e)"></div>
<div class="ab" style="left:1113px;top:267px;width:1px;height:337px;background:#d4d4d4"></div>
<div class="ab" style="left:1113px;top:247px;width:1px;height:19px;background:linear-gradient(#d0d0d0,#a8a8a8 40%,#9e9e9e)"></div>
<div class="ab" style="left:1177px;top:267px;width:1px;height:337px;background:#d4d4d4"></div>
<div class="ab" style="left:1177px;top:247px;width:1px;height:19px;background:linear-gradient(#d0d0d0,#a8a8a8 40%,#9e9e9e)"></div>
<div class="ab" style="left:1241px;top:267px;width:1px;height:337px;background:#d4d4d4"></div>
<div class="ab" style="left:1241px;top:247px;width:1px;height:19px;background:linear-gradient(#d0d0d0,#a8a8a8 40%,#9e9e9e)"></div>
<div class="ab" style="left:1305px;top:267px;width:1px;height:337px;background:#d4d4d4"></div>
<div class="ab" style="left:1305px;top:247px;width:1px;height:19px;background:linear-gradient(#d0d0d0,#a8a8a8 40%,#9e9e9e)"></div>
<div class="ab" style="left:1369px;top:267px;width:1px;height:337px;background:#d4d4d4"></div>
<div class="ab" style="left:1369px;top:247px;width:1px;height:19px;background:linear-gradient(#d0d0d0,#a8a8a8 40%,#9e9e9e)"></div>
<div class="ab" style="left:1433px;top:267px;width:1px;height:337px;background:#d4d4d4"></div>
<div class="ab" style="left:1433px;top:247px;width:1px;height:19px;background:linear-gradient(#d0d0d0,#a8a8a8 40%,#9e9e9e)"></div>
<div class="ab" style="left:26px;top:286px;width:1408px;height:1px;background:#d4d4d4"></div>
<div class="ab" style="left:0px;top:286px;width:25px;height:1px;background:#bdbdbd"></div>
<div class="ab" style="left:26px;top:306px;width:1408px;height:1px;background:#d4d4d4"></div>
<div class="ab" style="left:0px;top:306px;width:25px;height:1px;background:#bdbdbd"></div>
<div class="ab" style="left:26px;top:326px;width:1408px;height:1px;background:#d4d4d4"></div>
<div class="ab" style="left:0px;top:326px;width:25px;height:1px;background:#bdbdbd"></div>
<div class="ab" style="left:26px;top:346px;width:1408px;height:1px;background:#d4d4d4"></div>
<div class="ab" style="left:0px;top:346px;width:25px;height:1px;background:#bdbdbd"></div>
<div class="ab" style="left:26px;top:366px;width:1408px;height:1px;background:#d4d4d4"></div>
<div class="ab" style="left:0px;top:366px;width:25px;height:1px;background:#bdbdbd"></div>
<div class="ab" style="left:26px;top:386px;width:1408px;height:1px;background:#d4d4d4"></div>
<div class="ab" style="left:0px;top:386px;width:25px;height:1px;background:#bdbdbd"></div>
<div class="ab" style="left:26px;top:406px;width:1408px;height:1px;background:#d4d4d4"></div>
<div class="ab" style="left:0px;top:406px;width:25px;height:1px;background:#bdbdbd"></div>
<div class="ab" style="left:26px;top:426px;width:1408px;height:1px;background:#d4d4d4"></div>
<div class="ab" style="left:0px;top:426px;width:25px;height:1px;background:#bdbdbd"></div>
<div class="ab" style="left:26px;top:446px;width:1408px;height:1px;background:#d4d4d4"></div>
<div class="ab" style="left:0px;top:446px;width:25px;height:1px;background:#bdbdbd"></div>
<div class="ab" style="left:26px;top:466px;width:1408px;height:1px;background:#d4d4d4"></div>
<div class="ab" style="left:0px;top:466px;width:25px;height:1px;background:#bdbdbd"></div>
<div class="ab" style="left:26px;top:486px;width:1408px;height:1px;background:#d4d4d4"></div>
<div class="ab" style="left:0px;top:486px;width:25px;height:1px;background:#bdbdbd"></div>
<div class="ab" style="left:26px;top:506px;width:1408px;height:1px;background:#d4d4d4"></div>
<div class="ab" style="left:0px;top:506px;width:25px;height:1px;background:#bdbdbd"></div>
<div class="ab" style="left:26px;top:526px;width:1408px;height:1px;background:#d4d4d4"></div>
<div class="ab" style="left:0px;top:526px;width:25px;height:1px;background:#bdbdbd"></div>
<div class="ab" style="left:26px;top:546px;width:1408px;height:1px;background:#d4d4d4"></div>
<div class="ab" style="left:0px;top:546px;width:25px;height:1px;background:#bdbdbd"></div>
<div class="ab" style="left:26px;top:566px;width:1408px;height:1px;background:#d4d4d4"></div>
<div class="ab" style="left:0px;top:566px;width:25px;height:1px;background:#bdbdbd"></div>
<div class="ab" style="left:26px;top:586px;width:1408px;height:1px;background:#d4d4d4"></div>
<div class="ab" style="left:0px;top:586px;width:25px;height:1px;background:#bdbdbd"></div>
<div class="ab" style="left:26px;top:606px;width:1408px;height:1px;background:#d4d4d4"></div>
<div class="ab" style="left:0px;top:606px;width:25px;height:1px;background:#bdbdbd"></div>
<div class="ab" style="left:1241px;top:267px;width:1px;height:19px;background:#fff"></div>
<div class="ab" style="left:1305px;top:267px;width:1px;height:19px;background:#fff"></div>
<div class="ab" style="left:25px;top:247px;width:1px;height:357px;background:#9e9e9e"></div>
<div class="ab" style="left:0px;top:266px;width:1434px;height:1px;background:#9e9e9e"></div>
<svg style="left:10px;top:251px" width="13" height="12" viewBox="0 0 13 12"><path d="M12 0.5V11.5H0.5z" fill="#b4b4b4"/></svg>
<div class="t" style="left:28.5px;width:60px;text-align:center;top:250.92px;font-size:12.5px;color:#222">A</div>
<div class="t" style="left:92.5px;width:60px;text-align:center;top:250.92px;font-size:12.5px;color:#222">B</div>
<div class="t" style="left:156.5px;width:60px;text-align:center;top:250.92px;font-size:12.5px;color:#222">C</div>
<div class="t" style="left:220.5px;width:60px;text-align:center;top:250.92px;font-size:12.5px;color:#222">D</div>
<div class="t" style="left:284.5px;width:60px;text-align:center;top:250.92px;font-size:12.5px;color:#222">E</div>
<div class="t" style="left:348.5px;width:60px;text-align:center;top:250.92px;font-size:12.5px;color:#222">F</div>
<div class="t" style="left:412.5px;width:60px;text-align:center;top:250.92px;font-size:12.5px;color:#222">G</div>
<div class="t" style="left:476.5px;width:60px;text-align:center;top:250.92px;font-size:12.5px;color:#222">H</div>
<div class="t" style="left:540.5px;width:60px;text-align:center;top:250.92px;font-size:12.5px;color:#222">I</div>
<div class="t" style="left:604.5px;width:60px;text-align:center;top:250.92px;font-size:12.5px;color:#222">J</div>
<div class="t" style="left:668.5px;width:60px;text-align:center;top:250.92px;font-size:12.5px;color:#222">K</div>
<div class="t" style="left:732.5px;width:60px;text-align:center;top:250.92px;font-size:12.5px;color:#222">L</div>
<div class="t" style="left:796.5px;width:60px;text-align:center;top:250.92px;font-size:12.5px;color:#222">M</div>
<div class="t" style="left:860.5px;width:60px;text-align:center;top:250.92px;font-size:12.5px;color:#222">N</div>
<div class="t" style="left:924.5px;width:60px;text-align:center;top:250.92px;font-size:12.5px;color:#222">O</div>
<div class="t" style="left:988.5px;width:60px;text-align:center;top:250.92px;font-size:12.5px;color:#222">P</div>
<div class="t" style="left:1052.5px;width:60px;text-align:center;top:250.92px;font-size:12.5px;color:#222">Q</div>
<div class="t" style="left:1116.5px;width:60px;text-align:center;top:250.92px;font-size:12.5px;color:#222">R</div>
<div class="t" style="left:1180.5px;width:60px;text-align:center;top:250.92px;font-size:12.5px;color:#222">S</div>
<div class="t" style="left:1244.5px;width:60px;text-align:center;top:250.92px;font-size:12.5px;color:#222">T</div>
<div class="t" style="left:1308.5px;width:60px;text-align:center;top:250.92px;font-size:12.5px;color:#222">U</div>
<div class="t" style="left:1372.5px;width:60px;text-align:center;top:250.92px;font-size:12.5px;color:#222">V</div>
<div class="t" style="left:0.5px;width:25px;text-align:center;top:272.42px;font-size:12.5px;color:#222;">1</div>
<div class="t" style="left:0.5px;width:25px;text-align:center;top:292.42px;font-size:12.5px;color:#222;">2</div>
<div class="t" style="left:0.5px;width:25px;text-align:center;top:312.42px;font-size:12.5px;color:#222;">3</div>
<div class="t" style="left:0.5px;width:25px;text-align:center;top:332.42px;font-size:12.5px;color:#222;">4</div>
<div class="t" style="left:0.5px;width:25px;text-align:center;top:352.42px;font-size:12.5px;color:#222;">5</div>
<div class="t" style="left:0.5px;width:25px;text-align:center;top:372.42px;font-size:12.5px;color:#222;">6</div>
<div class="t" style="left:0.5px;width:25px;text-align:center;top:392.42px;font-size:12.5px;color:#222;">7</div>
<div class="t" style="left:0.5px;width:25px;text-align:center;top:412.42px;font-size:12.5px;color:#222;">8</div>
<div class="t" style="left:0.5px;width:25px;text-align:center;top:432.42px;font-size:12.5px;color:#222;">9</div>
<div class="t" style="left:0.5px;width:25px;text-align:center;top:452.42px;font-size:12.5px;color:#222;transform:scaleX(0.92)">10</div>
<div class="t" style="left:0.5px;width:25px;text-align:center;top:472.42px;font-size:12.5px;color:#222;transform:scaleX(0.92)">11</div>
<div class="t" style="left:0.5px;width:25px;text-align:center;top:492.42px;font-size:12.5px;color:#222;transform:scaleX(0.92)">12</div>
<div class="t" style="left:0.5px;width:25px;text-align:center;top:512.42px;font-size:12.5px;color:#222;transform:scaleX(0.92)">13</div>
<div class="t" style="left:0.5px;width:25px;text-align:center;top:532.42px;font-size:12.5px;color:#222;transform:scaleX(0.92)">14</div>
<div class="t" style="left:0.5px;width:25px;text-align:center;top:552.42px;font-size:12.5px;color:#222;transform:scaleX(0.92)">15</div>
<div class="t" style="left:0.5px;width:25px;text-align:center;top:572.42px;font-size:12.5px;color:#222;transform:scaleX(0.92)">16</div>
<div class="t" style="left:0.5px;width:25px;text-align:center;top:592.42px;font-size:12.5px;color:#222;transform:scaleX(0.92)">17</div>
<div class="ab" style="left:26px;top:267px;width:63px;height:19px;overflow:hidden;color:#000"><div class="t" style="left:2px;top:3.57px;font-size:13.5px">First Name</div></div>
<div class="ab" style="left:90px;top:267px;width:63px;height:19px;overflow:hidden;color:#000"><div class="t" style="left:2px;top:3.57px;font-size:13.5px">Last Name</div></div>
<div class="ab" style="left:154px;top:267px;width:63px;height:19px;overflow:hidden;color:#000"><div class="t" style="left:2px;top:3.57px;font-size:13.5px">Valid From</div></div>
<div class="ab" style="left:218px;top:267px;width:63px;height:19px;overflow:hidden;color:#000"><div class="t" style="left:2px;top:3.57px;font-size:13.5px">Expiry Date</div></div>
<div class="ab" style="left:282px;top:267px;width:63px;height:19px;overflow:hidden;color:#000"><div class="t" style="left:2px;top:3.57px;font-size:13.5px">PIN</div></div>
<div class="ab" style="left:346px;top:267px;width:63px;height:19px;overflow:hidden;color:#000"><div class="t" style="left:2px;top:3.57px;font-size:13.5px">Verification</div></div>
<div class="ab" style="left:410px;top:267px;width:63px;height:19px;overflow:hidden;color:#000"><div class="t" style="left:2px;top:3.57px;font-size:13.5px">Is Barred</div></div>
<div class="ab" style="left:474px;top:267px;width:63px;height:19px;overflow:hidden;color:#000"><div class="t" style="left:2px;top:3.57px;font-size:13.5px">Exempt From</div></div>
<div class="ab" style="left:538px;top:267px;width:63px;height:19px;overflow:hidden;color:#000"><div class="t" style="left:2px;top:3.57px;font-size:13.5px">Small Custom</div></div>
<div class="ab" style="left:602px;top:267px;width:63px;height:19px;overflow:hidden;color:#000"><div class="t" style="left:2px;top:3.57px;font-size:13.5px">Small Custom</div></div>
<div class="ab" style="left:666px;top:267px;width:63px;height:19px;overflow:hidden;color:#000"><div class="t" style="left:2px;top:3.57px;font-size:13.5px">Large Custom</div></div>
<div class="ab" style="left:730px;top:267px;width:63px;height:19px;overflow:hidden;color:#000"><div class="t" style="left:2px;top:3.57px;font-size:13.5px">Large Custom</div></div>
<div class="ab" style="left:794px;top:267px;width:63px;height:19px;overflow:hidden;color:#000"><div class="t" style="left:2px;top:3.57px;font-size:13.5px">Extra Large</div></div>
<div class="ab" style="left:858px;top:267px;width:63px;height:19px;overflow:hidden;color:#000"><div class="t" style="left:2px;top:3.57px;font-size:13.5px">Access Level</div></div>
<div class="ab" style="left:922px;top:267px;width:63px;height:19px;overflow:hidden;color:#000"><div class="t" style="left:2px;top:3.57px;font-size:13.5px">User Group</div></div>
<div class="ab" style="left:986px;top:267px;width:63px;height:19px;overflow:hidden;color:#000"><div class="t" style="left:2px;top:3.57px;font-size:13.5px">Token 1 Data</div></div>
<div class="ab" style="left:1050px;top:267px;width:63px;height:19px;overflow:hidden;color:#000"><div class="t" style="left:2px;top:3.57px;font-size:13.5px">Token 1 Interface</div></div>
<div class="ab" style="left:1114px;top:267px;width:63px;height:19px;overflow:hidden;color:#000"><div class="t" style="left:2px;top:3.57px;font-size:13.5px">Token 2 Data</div></div>
<div class="ab" style="left:1178px;top:267px;width:63px;height:19px;overflow:visible;color:#000"><div class="t" style="left:2px;top:3.57px;font-size:13.5px">Token 2 Interface Type</div></div>
<div class="ab" style="left:26px;top:287px;width:63px;height:19px;overflow:hidden;color:#000"><div class="t" style="left:2px;top:3.57px;font-size:13.5px">Dean</div></div>
<div class="ab" style="left:90px;top:287px;width:63px;height:19px;overflow:hidden;color:#000"><div class="t" style="left:2px;top:3.57px;font-size:13.5px">Kernot</div></div>
<div class="ab" style="left:154px;top:287px;width:63px;height:19px;overflow:hidden;color:#000"><div class="t" style="left:5px;top:3.57px;font-size:13.5px;transform:scaleX(0.93);transform-origin:0 0">########</div></div>
<div class="ab" style="left:218px;top:287px;width:63px;height:19px;overflow:hidden;color:#000"><div class="t" style="left:5px;top:3.57px;font-size:13.5px;transform:scaleX(0.93);transform-origin:0 0">########</div></div>
<div class="ab" style="left:282px;top:287px;width:63px;height:19px;overflow:hidden;color:#000"><div class="t" style="right:2px;top:3.57px;font-size:13.5px;letter-spacing:-0.6px">12345678</div></div>
<div class="ab" style="left:346px;top:287px;width:63px;height:19px;overflow:hidden;color:#000"><div class="t" style="right:2px;top:3.57px;font-size:13.5px;letter-spacing:-0.6px">1234</div></div>
<div class="ab" style="left:410px;top:287px;width:63px;height:19px;overflow:hidden;color:#000"><div class="t" style="left:1px;width:63px;text-align:center;top:3.57px;font-size:13.5px;transform:scaleX(0.88)">FALSE</div></div>
<div class="ab" style="left:474px;top:287px;width:63px;height:19px;overflow:hidden;color:#000"><div class="t" style="left:1px;width:63px;text-align:center;top:3.57px;font-size:13.5px;transform:scaleX(0.88)">FALSE</div></div>
<div class="ab" style="left:858px;top:287px;width:63px;height:19px;overflow:hidden;color:#000"><div class="t" style="left:2px;top:3.57px;font-size:13.5px">Full Access</div></div>
<div class="ab" style="left:922px;top:287px;width:63px;height:19px;overflow:hidden;color:#000"><div class="t" style="left:2px;top:3.57px;font-size:13.5px">N.A</div></div>
<div class="ab" style="left:26px;top:307px;width:63px;height:19px;overflow:hidden;color:#000"><div class="t" style="left:2px;top:3.57px;font-size:13.5px">Lewis</div></div>
<div class="ab" style="left:90px;top:307px;width:63px;height:19px;overflow:hidden;color:#000"><div class="t" style="left:2px;top:3.57px;font-size:13.5px">B-C</div></div>
<div class="ab" style="left:154px;top:307px;width:63px;height:19px;overflow:hidden;color:#000"><div class="t" style="left:2px;top:3.57px;font-size:13.5px">N.A</div></div>
<div class="ab" style="left:218px;top:307px;width:63px;height:19px;overflow:hidden;color:#000"><div class="t" style="left:2px;top:3.57px;font-size:13.5px">N.A</div></div>
<div class="ab" style="left:282px;top:307px;width:63px;height:19px;overflow:hidden;color:#000"><div class="t" style="left:2px;top:3.57px;font-size:13.5px">N.A</div></div>
<div class="ab" style="left:346px;top:307px;width:63px;height:19px;overflow:hidden;color:#000"><div class="t" style="left:2px;top:3.57px;font-size:13.5px">N.A</div></div>
<div class="ab" style="left:410px;top:307px;width:63px;height:19px;overflow:hidden;color:#000"><div class="t" style="left:1px;width:63px;text-align:center;top:3.57px;font-size:13.5px;transform:scaleX(0.88)">FALSE</div></div>
<div class="ab" style="left:474px;top:307px;width:63px;height:19px;overflow:hidden;color:#000"><div class="t" style="left:1px;width:63px;text-align:center;top:3.57px;font-size:13.5px;transform:scaleX(0.88)">FALSE</div></div>
<div class="ab" style="left:858px;top:307px;width:63px;height:19px;overflow:hidden;color:#000"><div class="t" style="left:2px;top:3.57px;font-size:13.5px">Full Access</div></div>
<div class="ab" style="left:922px;top:307px;width:63px;height:19px;overflow:hidden;color:#000"><div class="t" style="left:2px;top:3.57px;font-size:13.5px">N.A</div></div>
<div class="ab" style="left:986px;top:307px;width:63px;height:19px;overflow:hidden;color:#000"><div class="t" style="right:2px;top:3.57px;font-size:13.5px;letter-spacing:-0.6px">13675290</div></div>
<div class="ab" style="left:1050px;top:307px;width:63px;height:19px;overflow:hidden;color:#000"><div class="t" style="left:2px;top:3.57px;font-size:13.5px">Clock and</div></div>
<div class="ab" style="left:1114px;top:307px;width:63px;height:19px;overflow:hidden;color:#000"><div class="t" style="right:2px;top:3.57px;font-size:13.5px;letter-spacing:-0.6px">1234567</div></div>
<div class="ab" style="left:1178px;top:307px;width:63px;height:19px;overflow:hidden;color:#000"><div class="t" style="left:2px;top:3.57px;font-size:13.5px">Wiegand</div></div>
<div class="ab" style="left:26px;top:327px;width:63px;height:19px;overflow:hidden;color:#000"><div class="t" style="left:2px;top:3.57px;font-size:13.5px">Joe</div></div>
<div class="ab" style="left:90px;top:327px;width:63px;height:19px;overflow:hidden;color:#000"><div class="t" style="left:2px;top:3.57px;font-size:13.5px">Blogs</div></div>
<div class="ab" style="left:154px;top:327px;width:63px;height:19px;overflow:hidden;color:#000"><div class="t" style="left:5px;top:3.57px;font-size:13.5px;transform:scaleX(0.93);transform-origin:0 0">########</div></div>
<div class="ab" style="left:218px;top:327px;width:63px;height:19px;overflow:hidden;color:#000"><div class="t" style="left:5px;top:3.57px;font-size:13.5px;transform:scaleX(0.93);transform-origin:0 0">########</div></div>
<div class="ab" style="left:282px;top:327px;width:63px;height:19px;overflow:hidden;color:#000"><div class="t" style="left:2px;top:3.57px;font-size:13.5px">N.A</div></div>
<div class="ab" style="left:346px;top:327px;width:63px;height:19px;overflow:hidden;color:#000"><div class="t" style="left:2px;top:3.57px;font-size:13.5px">N.A</div></div>
<div class="ab" style="left:410px;top:327px;width:63px;height:19px;overflow:hidden;color:#000"><div class="t" style="left:1px;width:63px;text-align:center;top:3.57px;font-size:13.5px;transform:scaleX(0.88)">FALSE</div></div>
<div class="ab" style="left:474px;top:327px;width:63px;height:19px;overflow:hidden;color:#000"><div class="t" style="left:1px;width:63px;text-align:center;top:3.57px;font-size:13.5px;transform:scaleX(0.88)">FALSE</div></div>
<div class="ab" style="left:858px;top:327px;width:63px;height:19px;overflow:hidden;color:#000"><div class="t" style="left:2px;top:3.57px;font-size:13.5px">Full Access</div></div>
<div class="ab" style="left:922px;top:327px;width:63px;height:19px;overflow:hidden;color:#000"><div class="t" style="left:2px;top:3.57px;font-size:13.5px">N.A</div></div>
<div class="ab" style="left:26px;top:347px;width:63px;height:19px;overflow:hidden;color:#000"><div class="t" style="left:2px;top:3.57px;font-size:13.5px">Jane</div></div>
<div class="ab" style="left:90px;top:347px;width:63px;height:19px;overflow:hidden;color:#000"><div class="t" style="left:2px;top:3.57px;font-size:13.5px">Doe</div></div>
<div class="ab" style="left:154px;top:347px;width:63px;height:19px;overflow:hidden;color:#000"><div class="t" style="left:5px;top:3.57px;font-size:13.5px;transform:scaleX(0.93);transform-origin:0 0">########</div></div>
<div class="ab" style="left:218px;top:347px;width:63px;height:19px;overflow:hidden;color:#000"><div class="t" style="left:5px;top:3.57px;font-size:13.5px;transform:scaleX(0.93);transform-origin:0 0">########</div></div>
<div class="ab" style="left:282px;top:347px;width:63px;height:19px;overflow:hidden;color:#000"><div class="t" style="left:2px;top:3.57px;font-size:13.5px">N.A</div></div>
<div class="ab" style="left:346px;top:347px;width:63px;height:19px;overflow:hidden;color:#000"><div class="t" style="left:2px;top:3.57px;font-size:13.5px">N.A</div></div>
<div class="ab" style="left:410px;top:347px;width:63px;height:19px;overflow:hidden;color:#000"><div class="t" style="left:1px;width:63px;text-align:center;top:3.57px;font-size:13.5px;transform:scaleX(0.88)">FALSE</div></div>
<div class="ab" style="left:474px;top:347px;width:63px;height:19px;overflow:hidden;color:#000"><div class="t" style="left:1px;width:63px;text-align:center;top:3.57px;font-size:13.5px;transform:scaleX(0.88)">FALSE</div></div>
<div class="ab" style="left:858px;top:347px;width:63px;height:19px;overflow:hidden;color:#000"><div class="t" style="left:2px;top:3.57px;font-size:13.5px">Full Access</div></div>
<div class="ab" style="left:922px;top:347px;width:63px;height:19px;overflow:hidden;color:#000"><div class="t" style="left:2px;top:3.57px;font-size:13.5px">N.A</div></div>
</body></html>
